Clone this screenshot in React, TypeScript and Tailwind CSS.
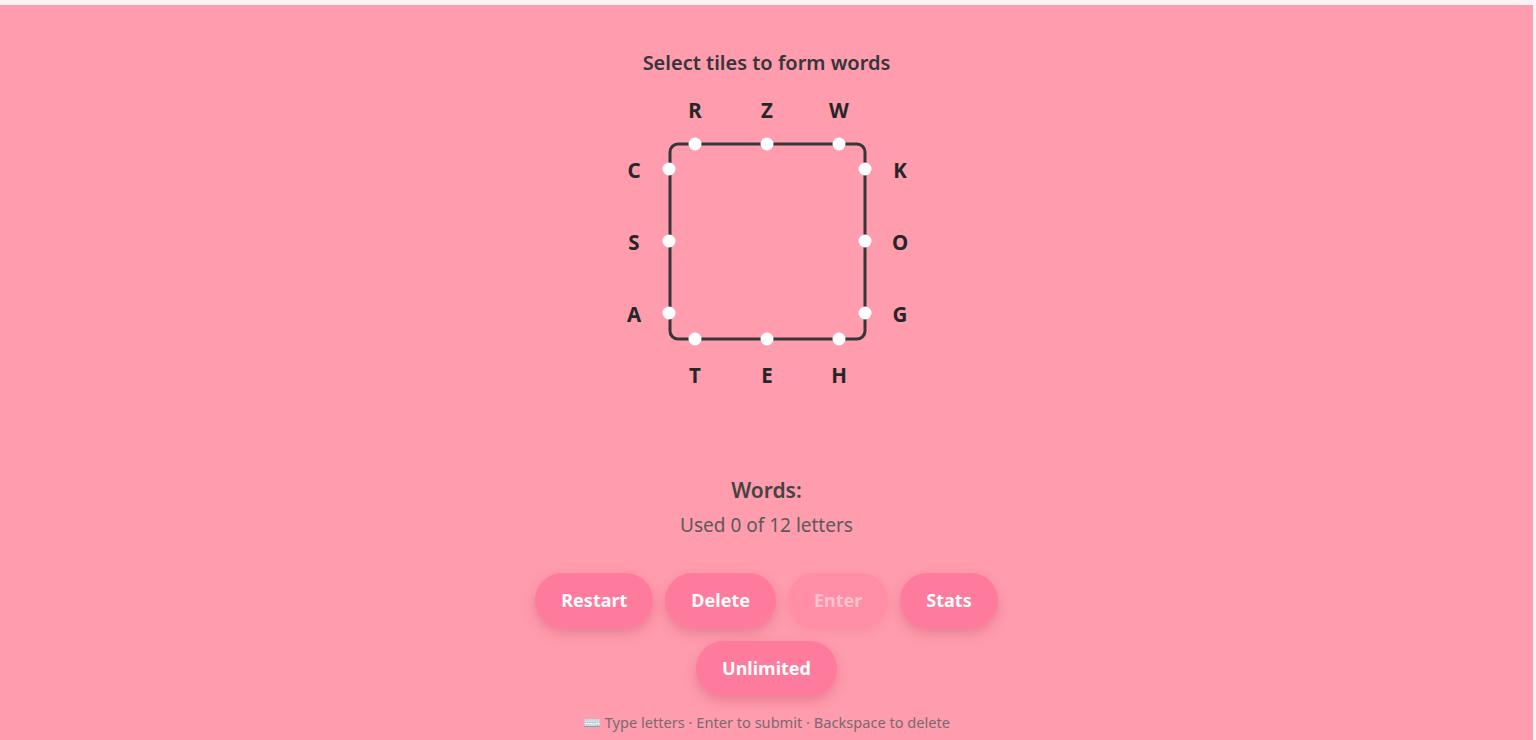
import React from "react";

function Letter({ x, y, ch }: { x: number; y: number; ch: string }) {
  return (
    <text x={x} y={y} textAnchor="middle" dominantBaseline="central" fontSize="20.5" fontWeight="700" fill="#262626">
      {ch}
    </text>
  );
}

function Board() {
  const top = [94, 166, 238];
  const side = [81, 153, 225];
  const topLetters = ["R", "Z", "W"];
  const leftLetters = ["C", "S", "A"];
  const rightLetters = ["K", "O", "G"];
  const bottomLetters = ["T", "E", "H"];
  return (
    <svg width="332" height="310" viewBox="0 0 332 310" className="mt-[11px] block font-['Noto_Sans',sans-serif]">
      <rect x="69" y="56" width="195" height="195" rx="8" fill="none" stroke="#363636" strokeWidth="3" />
      {top.map((x, i) => (
        <g key={"t" + i}>
          <circle cx={x} cy={56} r="6.5" fill="#fff" />
          <circle cx={x} cy={251} r="6.5" fill="#fff" />
          <Letter x={x} y={22} ch={topLetters[i]} />
          <Letter x={x} y={287} ch={bottomLetters[i]} />
        </g>
      ))}
      {side.map((y, i) => (
        <g key={"s" + i}>
          <circle cx={68} cy={y} r="6.5" fill="#fff" />
          <circle cx={264} cy={y} r="6.5" fill="#fff" />
          <Letter x={33} y={y + 1} ch={leftLetters[i]} />
          <Letter x={299} y={y + 1} ch={rightLetters[i]} />
        </g>
      ))}
    </svg>
  );
}

function Btn({ label, disabled }: { label: string; disabled?: boolean }) {
  return (
    <button
      className={
        disabled
          ? "h-[55px] px-[26px] rounded-full bg-[#ff8ea6] text-[#ffc3cf] text-[18px] font-bold shadow-[0_4px_10px_rgba(200,60,100,0.12)]"
          : "h-[55px] px-[26px] rounded-full bg-[#ff7b9d] text-white text-[18px] font-bold shadow-[0_5px_12px_rgba(170,40,80,0.25)]"
      }
    >
      {label}
    </button>
  );
}

export default function App() {
  return (
    <div className="h-[740px] overflow-hidden bg-[#ff9cad] border-t-[5px] border-r-[3px] border-[#fff2f5] flex flex-col items-center font-['Noto_Sans',sans-serif]">
      <div className="pt-[44px] text-[20px] leading-[28px] font-semibold text-[#35353b]">Select tiles to form words</div>
      <Board />
      <div className="mt-[77px] text-[21px] leading-[30px] font-semibold text-[#444444]">Words:</div>
      <div className="mt-[7px] text-[19px] leading-[26px] text-[#5a5a5a]">Used 0 of 12 letters</div>
      <div className="mt-[35px] flex gap-[12px]">
        <Btn label="Restart" />
        <Btn label="Delete" />
        <Btn label="Enter" disabled />
        <Btn label="Stats" />
      </div>
      <div className="mt-[13px] flex">
        <Btn label="Unlimited" />
      </div>
      <div className="mt-[16px] text-[14.6px] leading-[20px] text-[#7a6a70]">⌨️ Type letters · Enter to submit · Backspace to delete</div>
    </div>
  );
}
